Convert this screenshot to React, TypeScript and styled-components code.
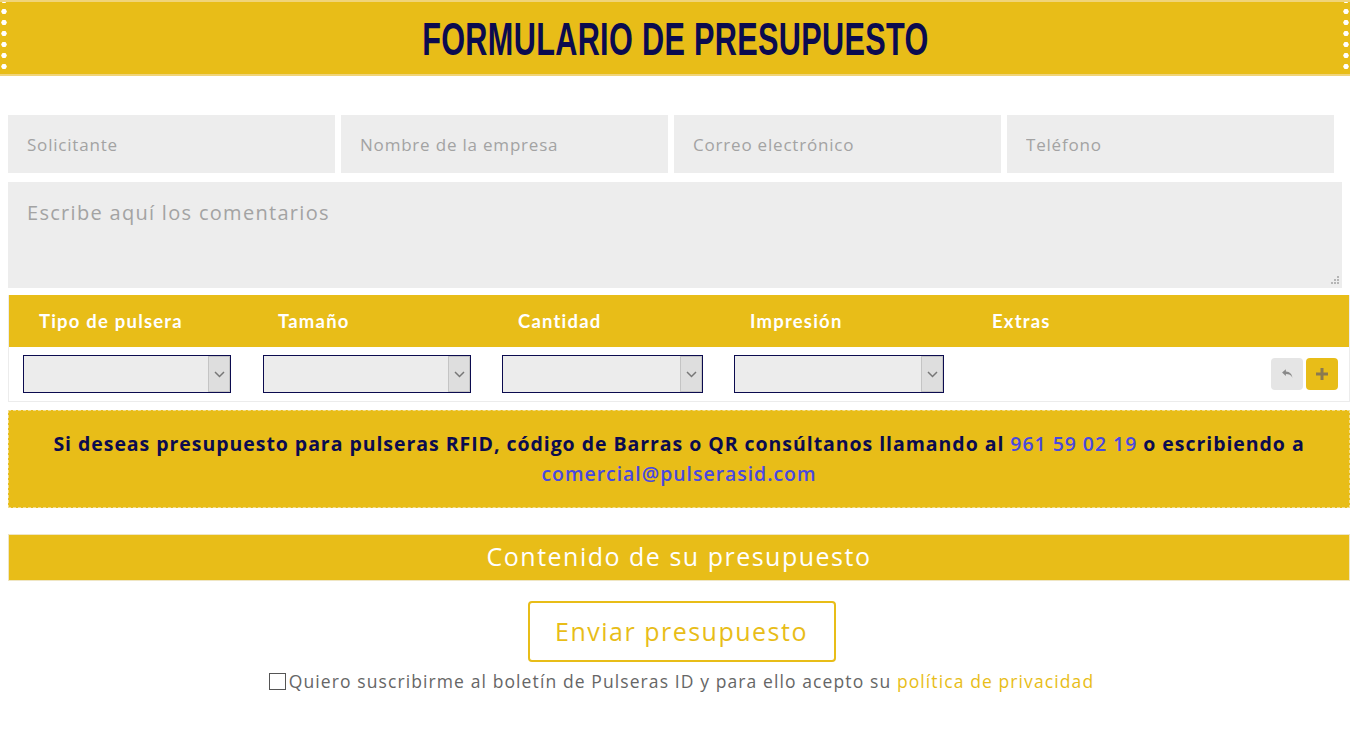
import React from "react";
import styled, { createGlobalStyle } from "styled-components";

const GlobalStyle = createGlobalStyle`
  html, body {
    margin: 0;
    padding: 0;
    background: #ffffff;
    font-family: "Open Sans", "Noto Sans", sans-serif;
    overflow: hidden;
  }
  * { box-sizing: border-box; }
`;

const yellow = "#e8bd18";
const navy = "#0b0b4f";

const Page = styled.div`
  width: 1350px;
  padding-left: 8px;
`;

const Header = styled.header`
  height: 76px;
  margin-left: -8px;
  background-color: ${yellow};
  border-top: 2px solid #f0d47a;
  border-bottom: 2px solid #f0d47a;
  background-image: radial-gradient(circle, #ffffff 2.4px, transparent 2.9px),
    radial-gradient(circle, #ffffff 2.4px, transparent 2.9px);
  background-size: 8px 11px, 8px 11px;
  background-repeat: repeat-y, repeat-y;
  background-position: 0 4px, 1342px 4px;
  display: flex;
  align-items: center;
  justify-content: center;
`;

const Title = styled.h1`
  margin: 0;
  font-family: "Liberation Sans", Arial, sans-serif;
  font-weight: 700;
  font-size: 47px;
  color: ${navy};
  letter-spacing: 0.5px;
  transform: scaleX(0.652);
  white-space: nowrap;
`;

const Fields = styled.div`
  margin-top: 39px;
  display: grid;
  grid-template-columns: repeat(4, 327px);
  column-gap: 6px;
`;

const Field = styled.input`
  height: 58px;
  border: none;
  background: #ededed;
  padding: 0 19px;
  font-family: "Open Sans", sans-serif;
  font-size: 17px;
  letter-spacing: 0.8px;
  color: #555;
  outline: none;
  &::placeholder {
    color: #a3a3a3;
  }
`;

const CommentsWrap = styled.div`
  position: relative;
  margin-top: 9px;
  width: 1334px;
`;

const Comments = styled.textarea`
  display: block;
  width: 100%;
  height: 106px;
  border: none;
  background: #ededed;
  padding: 17px 19px;
  font-family: "Open Sans", sans-serif;
  font-size: 20px;
  letter-spacing: 1.3px;
  outline: none;
  resize: none;
  &::placeholder {
    color: #a3a3a3;
  }
`;

const Grip = styled.svg`
  position: absolute;
  right: 2px;
  bottom: 3px;
`;

const Table = styled.div`
  margin-top: 7px;
  border: 1px solid #ececec;
  border-top: none;
`;

const HeadRow = styled.div`
  height: 52px;
  background: ${yellow};
  display: grid;
  grid-template-columns: 239px 240px 232px 242px 1fr;
  align-items: center;
  padding-left: 30px;
`;

const HeadCell = styled.div`
  color: #ffffff;
  font-family: "Lato", sans-serif;
  font-weight: 700;
  font-size: 18.5px;
  letter-spacing: 1.2px;
`;

const BodyRow = styled.div`
  height: 54px;
  display: flex;
  align-items: center;
  padding: 0 11px 0 14px;
`;

const SelectBox = styled.div<{ $w: number; $gap: number }>`
  width: ${(p) => p.$w}px;
  margin-right: ${(p) => p.$gap}px;
  height: 38px;
  border: 1px solid ${navy};
  background: #ececec;
  display: flex;
  justify-content: flex-end;
`;

const Arrow = styled.div`
  width: 22px;
  height: 100%;
  background: #dedede;
  border: 1px solid #c4c4c4;
  display: flex;
  align-items: center;
  justify-content: center;
`;

const Spacer = styled.div`
  flex: 1;
`;

const IconButton = styled.button<{ $tone: "grey" | "gold" }>`
  width: 32px;
  height: 32px;
  border: none;
  border-radius: 4px;
  margin-left: 3px;
  background: ${(p) => (p.$tone === "gold" ? yellow : "#e5e5e5")};
  display: flex;
  align-items: center;
  justify-content: center;
  padding: 0;
`;

const Notice = styled.div`
  margin-top: 8px;
  height: 98px;
  background: ${yellow};
  border: 1px dashed #f3dd8c;
  display: flex;
  align-items: center;
  justify-content: center;
  text-align: center;
  padding: 0 20px;
  color: ${navy};
  font-family: "Open Sans", sans-serif;
  font-weight: 700;
  font-size: 19.5px;
  letter-spacing: 0.95px;
  line-height: 30px;
`;

const Link = styled.a<{ $tone: "blue" | "gold" }>`
  color: ${(p) => (p.$tone === "blue" ? "#4848e0" : yellow)};
  text-decoration: none;
  font-weight: ${(p) => (p.$tone === "blue" ? 600 : 400)};
`;

const Summary = styled.div`
  margin-top: 26px;
  height: 47px;
  background: ${yellow};
  border: 1px solid #efe6c4;
  color: #ffffff;
  font-family: "Open Sans", sans-serif;
  font-size: 25px;
  letter-spacing: 1.5px;
  display: flex;
  align-items: center;
  justify-content: center;
  padding-bottom: 3px;
`;

const Actions = styled.div`
  margin-top: 20px;
  display: flex;
  flex-direction: column;
  align-items: center;
  padding-left: 5px;
`;

const SendButton = styled.button`
  width: 308px;
  height: 61px;
  background: #ffffff;
  border: 2px solid ${yellow};
  border-radius: 4px;
  color: ${yellow};
  font-family: "Open Sans", sans-serif;
  font-size: 25px;
  letter-spacing: 1.5px;
  padding-bottom: 3px;
`;

const Consent = styled.label`
  margin-top: 7px;
  display: flex;
  align-items: center;
  gap: 3px;
  color: #666666;
  font-family: "Open Sans", sans-serif;
  font-size: 17.5px;
  letter-spacing: 1.1px;
`;

const Box = styled.span`
  width: 17px;
  height: 17px;
  border: 1.5px solid #555;
  display: inline-block;
`;

const Chevron = () => (
  <svg width="11" height="7" viewBox="0 0 11 7">
    <path d="M1 1l4.5 4.5L10 1" fill="none" stroke="#777" strokeWidth="1.5" />
  </svg>
);

const selects = [
  { w: 208, gap: 32 },
  { w: 208, gap: 31 },
  { w: 201, gap: 31 },
  { w: 210, gap: 0 },
];

export default function App() {
  return (
    <>
      <GlobalStyle />
      <Page>
        <Header>
          <Title>FORMULARIO DE PRESUPUESTO</Title>
        </Header>

        <Fields>
          <Field placeholder="Solicitante" />
          <Field placeholder="Nombre de la empresa" />
          <Field placeholder="Correo electrónico" />
          <Field placeholder="Teléfono" />
        </Fields>
        <CommentsWrap>
          <Comments placeholder="Escribe aquí los comentarios" />
          <Grip width="10" height="10" viewBox="0 0 10 10">
            <g fill="#b5b5b5">
              <rect x="7" y="1" width="2" height="2" />
              <rect x="4" y="4" width="2" height="2" />
              <rect x="7" y="4" width="2" height="2" />
              <rect x="1" y="7" width="2" height="2" />
              <rect x="4" y="7" width="2" height="2" />
              <rect x="7" y="7" width="2" height="2" />
            </g>
          </Grip>
        </CommentsWrap>

        <Table>
          <HeadRow>
            <HeadCell>Tipo de pulsera</HeadCell>
            <HeadCell>Tamaño</HeadCell>
            <HeadCell>Cantidad</HeadCell>
            <HeadCell>Impresión</HeadCell>
            <HeadCell>Extras</HeadCell>
          </HeadRow>
          <BodyRow>
            {selects.map((s, i) => (
              <SelectBox key={i} $w={s.w} $gap={s.gap}>
                <Arrow>
                  <Chevron />
                </Arrow>
              </SelectBox>
            ))}
            <Spacer />
            <IconButton $tone="grey">
              <svg width="13" height="12" viewBox="0 0 12 11">
                <path d="M4.5 1L1 4.2l3.5 3.2V5.4c3 0 5 .8 6 3.6C10.2 5.6 8.3 3.4 4.5 3.1z" fill="#8a8a8a" />
              </svg>
            </IconButton>
            <IconButton $tone="gold">
              <svg width="12" height="12" viewBox="0 0 12 12">
                <path d="M4.5 0h3v4.5H12v3H7.5V12h-3V7.5H0v-3h4.5z" fill="#8a7a50" />
              </svg>
            </IconButton>
          </BodyRow>
        </Table>

        <Notice>
          <div>
            Si deseas presupuesto para pulseras RFID, código de Barras o QR consúltanos llamando al{" "}
            <Link $tone="blue" href="#">961 59 02 19</Link> o escribiendo a{" "}
            <Link $tone="blue" href="#">comercial@pulserasid.com</Link>
          </div>
        </Notice>

        <Summary>Contenido de su presupuesto</Summary>

        <Actions>
          <SendButton>Enviar presupuesto</SendButton>
          <Consent>
            <Box />
            <span>
              Quiero suscribirme al boletín de Pulseras ID y para ello acepto su{" "}
              <Link $tone="gold" href="#">política de privacidad</Link>
            </span>
          </Consent>
        </Actions>
      </Page>
    </>
  );
}
